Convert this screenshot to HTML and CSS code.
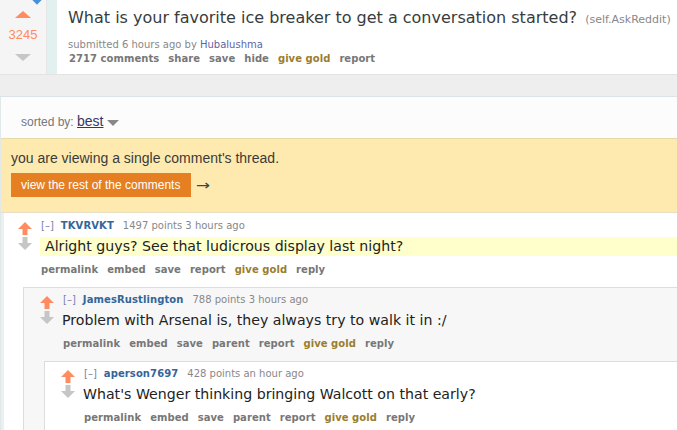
FILE: index.html
```html
<!DOCTYPE html>
<html>
<head>
<meta charset="utf-8">
<link rel="stylesheet" href="styles.css">
</head>
<body>
<div class="post">
  <div class="vote-col">
    <span class="pin"></span>
    <svg class="post-arrow up" width="16" height="7" viewBox="0 0 16 7"><path d="M8 0 L16 7 L0 7 Z" fill="#ff8b60"/></svg>
    <div class="score">3245</div>
    <svg class="post-arrow down" width="16" height="7" viewBox="0 0 16 7"><path d="M0 0 L16 0 L8 7 Z" fill="#c6c6c6"/></svg>
  </div>
  <div class="stripe"></div>
  <div class="post-entry">
    <p class="title"><a class="title-link">What is your favorite ice breaker to get a conversation started?</a> <span class="domain">(self.AskReddit)</span></p>
    <p class="tagline">submitted 6 hours ago by <a class="author">Hubalushma</a></p>
    <ul class="buttons">
      <li><a>2717 comments</a></li>
      <li><a>share</a></li>
      <li><a>save</a></li>
      <li><a>hide</a></li>
      <li><a class="gold">give gold</a></li>
      <li><a>report</a></li>
    </ul>
  </div>
</div>
<div class="band"></div>
<div class="panel">
  <div class="sort">sorted by: <a class="sort-link">best</a><svg class="sort-caret" width="12" height="6" viewBox="0 0 12 6"><path d="M0 0 L12 0 L6 6 Z" fill="#888"/></svg></div>
  <div class="infobar">
    <p class="infobar-msg">you are viewing a single comment's thread.</p>
    <div class="infobar-row"><a class="rest-btn">view the rest of the comments</a><span class="rest-arrow">→</span></div>
  </div>
  <div class="comments">
    <div class="comment top">
      <div class="comment-row">
        <div class="midcol">
          <svg width="14" height="13" viewBox="0 0 14 13"><path d="M7 0 L14 7 L9.5 7 L9.5 13 L4.5 13 L4.5 7 L0 7 Z" fill="#ff8b60"/></svg>
          <svg width="14" height="13" viewBox="0 0 14 13"><path d="M4.5 0 L9.5 0 L9.5 6 L14 6 L7 13 L0 6 L4.5 6 Z" fill="#c6c6c6"/></svg>
        </div>
        <div class="c-entry">
          <p class="c-tagline"><span class="expand">[–]</span><a class="c-author">TKVRVKT</a><span class="score-txt">1497 points 3 hours ago</span></p>
          <p class="c-body highlight">Alright guys? See that ludicrous display last night?</p>
          <ul class="buttons c-buttons">
            <li><a>permalink</a></li><li><a>embed</a></li><li><a>save</a></li><li><a>report</a></li><li><a class="gold">give gold</a></li><li><a>reply</a></li>
          </ul>
        </div>
      </div>
      <div class="children">
        <div class="comment nested odd">
          <div class="comment-row">
            <div class="midcol">
              <svg width="14" height="13" viewBox="0 0 14 13"><path d="M7 0 L14 7 L9.5 7 L9.5 13 L4.5 13 L4.5 7 L0 7 Z" fill="#ff8b60"/></svg>
              <svg width="14" height="13" viewBox="0 0 14 13"><path d="M4.5 0 L9.5 0 L9.5 6 L14 6 L7 13 L0 6 L4.5 6 Z" fill="#c6c6c6"/></svg>
            </div>
            <div class="c-entry">
              <p class="c-tagline"><span class="expand">[–]</span><a class="c-author">JamesRustlington</a><span class="score-txt">788 points 3 hours ago</span></p>
              <p class="c-body">Problem with Arsenal is, they always try to walk it in :/</p>
              <ul class="buttons c-buttons">
                <li><a>permalink</a></li><li><a>embed</a></li><li><a>save</a></li><li><a>parent</a></li><li><a>report</a></li><li><a class="gold">give gold</a></li><li><a>reply</a></li>
              </ul>
            </div>
          </div>
          <div class="children">
            <div class="comment nested even last">
              <div class="comment-row">
                <div class="midcol">
                  <svg width="14" height="13" viewBox="0 0 14 13"><path d="M7 0 L14 7 L9.5 7 L9.5 13 L4.5 13 L4.5 7 L0 7 Z" fill="#ff8b60"/></svg>
                  <svg width="14" height="13" viewBox="0 0 14 13"><path d="M4.5 0 L9.5 0 L9.5 6 L14 6 L7 13 L0 6 L4.5 6 Z" fill="#c6c6c6"/></svg>
                </div>
                <div class="c-entry">
                  <p class="c-tagline"><span class="expand">[–]</span><a class="c-author">aperson7697</a><span class="score-txt">428 points an hour ago</span></p>
                  <p class="c-body">What's Wenger thinking bringing Walcott on that early?</p>
                  <ul class="buttons c-buttons">
                    <li><a>permalink</a></li><li><a>embed</a></li><li><a>save</a></li><li><a>parent</a></li><li><a>report</a></li><li><a class="gold">give gold</a></li><li><a>reply</a></li>
                  </ul>
                </div>
              </div>
            </div>
          </div>
        </div>
      </div>
    </div>
  </div>
</div>
</body>
</html>
```
FILE: styles.css
```css
* { box-sizing: border-box; }
html, body { margin: 0; padding: 0; }
body {
  width: 677px;
  height: 430px;
  overflow: hidden;
  background: #ffffff;
  font-family: "DejaVu Sans", Verdana, sans-serif;
  font-size: 10px;
  color: #222;
}
p, ul { margin: 0; padding: 0; }
ul { list-style: none; }
a { text-decoration: none; }

.post {
  display: flex;
  height: 75px;
  border-bottom: 1px solid #e3e3e3;
}
.vote-col {
  position: relative;
  width: 47px;
  background: #f5f5f5;
  border-right: 1px solid #e6e6e6;
  display: flex;
  flex-direction: column;
  align-items: center;
  padding-top: 11px;
}
.pin {
  position: absolute;
  left: 33px;
  top: -5px;
  width: 8px;
  height: 8px;
  background: #4a8fd8;
  transform: rotate(45deg);
}
.post-arrow { display: block; }
.score {
  font-family: "Liberation Sans", Arial, sans-serif;
  font-size: 13px;
  color: #ff8b60;
  line-height: 15px;
  margin: 9px 0 12px;
}
.stripe {
  width: 10px;
  background: #e2f0f0;
}
.post-entry {
  flex: 1;
  padding-left: 11px;
  padding-top: 6px;
}
.title {
  font-size: 16px;
  line-height: 24px;
  white-space: nowrap;
}
.title-link { color: #373c3f; }
.domain { font-size: 11px; color: #888; margin-left: 3px; }
.tagline {
  color: #888;
  line-height: 14px;
  margin-top: 6px;
}
.author { color: #5f63a8; }

.buttons { display: flex; line-height: 14px; }
.buttons li { padding-right: 7px; }
.buttons a {
  font-weight: bold;
  color: #777;
  padding: 0 1px;
  letter-spacing: 0.05px;
}
.buttons a.gold { color: #9a7d2e; }

.band {
  height: 22px;
  background: #eeeeee;
  border-bottom: 1px solid #dde4e7;
}
.panel {
  border-left: 1px solid #e2e8ea;
  background: #ffffff;
}
.sort {
  height: 41px;
  background: #fcfcfd;
  padding: 16px 0 0 20px;
  font-family: "Liberation Sans", Arial, sans-serif;
  font-size: 12px;
  color: #777;
  line-height: 16px;
}
.sort-link {
  font-size: 14px;
  color: #373760;
  text-decoration: underline;
}
.sort-caret { margin-left: 3px; vertical-align: 0; }

.infobar {
  background: #feeaae;
  border-top: 1px solid #e6d9a8;
  border-bottom: 1px solid #e6dfc6;
  height: 75px;
  padding: 10px 0 0 10px;
  font-family: "Liberation Sans", Arial, sans-serif;
}
.infobar-msg {
  font-size: 14px;
  color: #3a3a3a;
  line-height: 18px;
}
.infobar-row {
  display: flex;
  align-items: center;
  margin-top: 6px;
}
.rest-btn {
  display: block;
  width: 180px;
  height: 24px;
  background: #e57f22;
  color: #fff;
  font-size: 12px;
  line-height: 24px;
  padding-left: 10px;
}
.rest-arrow {
  font-family: "DejaVu Sans", sans-serif;
  font-size: 14px;
  line-height: 24px;
  color: #444;
  margin-left: 5px;
  transform: scaleX(1.2);
  transform-origin: left center;
}

.comments {
  border-left: 3px solid #e8f0f0;
}
.comment-row {
  display: flex;
  padding-top: 5px;
}
.comment.top > .comment-row { padding-top: 6px; }
.comment.last > .comment-row { padding-bottom: 20px; }
.midcol {
  width: 14px;
  margin-left: 14px;
  margin-top: 3px;
  display: flex;
  flex-direction: column;
  gap: 2px;
}
.midcol svg { display: block; }
.c-entry {
  flex: 1;
  margin-left: 8px;
}
.c-tagline {
  line-height: 13px;
  color: #888;
  white-space: nowrap;
}
.expand { color: #7d7dae; margin-right: 7px; margin-left: 1px; }
.c-author { color: #369; font-weight: bold; margin-right: 9px; letter-spacing: 0.1px; }
.c-body {
  margin-top: 5px;
  font-size: 14.15px;
  line-height: 19px;
  height: 19px;
  color: #222;
  white-space: nowrap;
}
.c-body.highlight {
  background: #ffffcc;
  padding-left: 5px;
}
.c-buttons { margin-top: 7px; line-height: 13px; }
.children {
  margin-left: 19px;
  margin-top: 11px;
}
.comment.nested .children { margin-left: 20px; }
.comment.nested {
  border-left: 1px solid #dddddd;
  border-top: 1px solid #dddddd;
}
.comment.odd { background: #f7f7f8; }
.comment.even { background: #ffffff; }
.comment.nested .midcol { margin-left: 16px; }
```
